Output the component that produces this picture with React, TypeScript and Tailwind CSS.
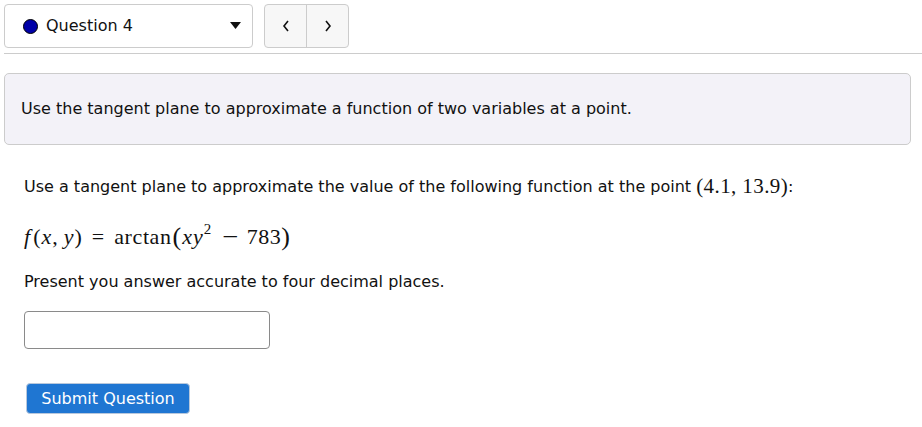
import React from "react";

const sans = { fontFamily: '"DejaVu Sans", Verdana, sans-serif' };

function M({ children, cls = "" }: { children: React.ReactNode; cls?: string }) {
  return (
    <span className={"text-[21px] [font-family:'Liberation_Serif',serif] whitespace-nowrap " + cls}>
      {children}
    </span>
  );
}

export default function App() {
  return (
    <div className="w-[922px] h-[427px] bg-white text-black overflow-hidden" style={sans}>
      <div className="flex items-start gap-[11px] pt-[4px] pl-[4px]">
        <div className="w-[249px] h-[44px] border border-[#cccccc] rounded-[4px] flex items-center pl-[18px] pr-[11px]">
          <span className="w-[15px] h-[15px] rounded-full bg-[#0000a8] border-[1.5px] border-black shrink-0" />
          <span className="ml-[8px] text-[16px] text-[#111]">Question 4</span>
          <span className="ml-auto">
            <svg width="11" height="8" viewBox="0 0 11 8">
              <path d="M0 0 L11 0 L5.5 7 Z" fill="#111" />
            </svg>
          </span>
        </div>
        <div className="flex h-[44px] w-[85px] border border-[#cccccc] rounded-[4px] bg-[#f7f7f7]">
          <div className="flex-1 flex items-center justify-center border-r border-[#cccccc]">
            <svg width="8" height="12" viewBox="0 0 8 12">
              <path d="M6 1 L2 6 L6 11" stroke="#111" strokeWidth="1.6" fill="none" />
            </svg>
          </div>
          <div className="flex-1 flex items-center justify-center">
            <svg width="8" height="12" viewBox="0 0 8 12">
              <path d="M2 1 L6 6 L2 11" stroke="#111" strokeWidth="1.6" fill="none" />
            </svg>
          </div>
        </div>
      </div>
      <div className="ml-[4px] mt-[5px] border-t border-[#cccccc]" />
      <div className="ml-[4px] mr-[11px] mt-[19px] h-[72px] bg-[#f3f2f8] border border-[#cccccc] rounded-[5px] flex items-center pl-[16px]">
        <span className="text-[16px] text-[#111]">Use the tangent plane to approximate a function of two variables at a point.</span>
      </div>
      <div className="pl-[24px] text-[16px] text-[#111]">
        <div className="mt-[29px] h-[26px] flex items-center">
          <span>Use a tangent plane to approximate the value of the following function at the point&nbsp;</span>
          <M cls="tracking-[0.4px]">(4.1, 13.9)</M>
          <span>:</span>
        </div>
        <div className="mt-[20px] h-[30px] flex items-center">
          <M cls="text-[22px] flex items-baseline">
            <i className="mr-[3px]">f</i>
            <span>(</span>
            <i className="mx-[1px]">x</i>
            <span>,</span>
            <i className="ml-[6px] mr-[1px]">y</i>
            <span>)</span>
            <span className="mx-[10px]">=</span>
            <span className="tracking-[0.6px]">arctan</span>
            <span className="text-[26px] relative top-[1px] ml-[1px]">(</span>
            <i className="mx-[1px]">x</i>
            <i className="mr-[1px]">y</i>
            <span className="text-[15px] relative top-[-10px]">2</span>
            <span className="ml-[13px] mr-[10px] inline-block scale-x-[1.3]">−</span>
            <span className="tracking-[0.5px]">783</span>
            <span className="text-[26px] relative top-[1px]">)</span>
          </M>
        </div>
        <div className="mt-[20px] h-[24px] flex items-center">Present you answer accurate to four decimal places.</div>
        <div className="mt-[17px]">
          <div className="w-[246px] h-[38px] border border-[#8a8a8a] rounded-[4px]" />
        </div>
        <div className="mt-[34px] ml-[2px]">
          <button className="w-[164px] h-[31px] bg-[#1f76d2] border border-[#b8c8dc] rounded-[4px] text-white text-[16px] flex items-center justify-center">
            Submit Question
          </button>
        </div>
      </div>
    </div>
  );
}
